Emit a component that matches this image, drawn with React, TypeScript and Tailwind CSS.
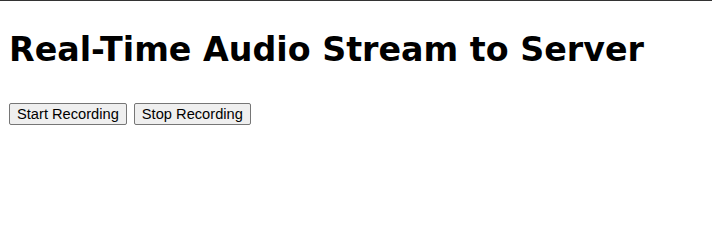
export default function App() {
  return (
    <div className="min-h-[252px] border-t border-[#333] bg-white px-[9px] pt-2 text-black">
      <h1 className="mt-[21px] mb-[33px] text-[33.3px] font-bold leading-[40px] font-['DejaVu_Sans',sans-serif]">
        Real-Time Audio Stream to Server
      </h1>
      <div className="flex gap-[7px] font-['Liberation_Sans',Arial,sans-serif] text-[14.67px]">
        <button className="h-[22px] rounded-[2px] border border-[#767676] bg-[#efefef] px-[7px] leading-none">
          Start Recording
        </button>
        <button className="h-[22px] rounded-[2px] border border-[#767676] bg-[#efefef] px-[7px] leading-none">
          Stop Recording
        </button>
      </div>
    </div>
  )
}
